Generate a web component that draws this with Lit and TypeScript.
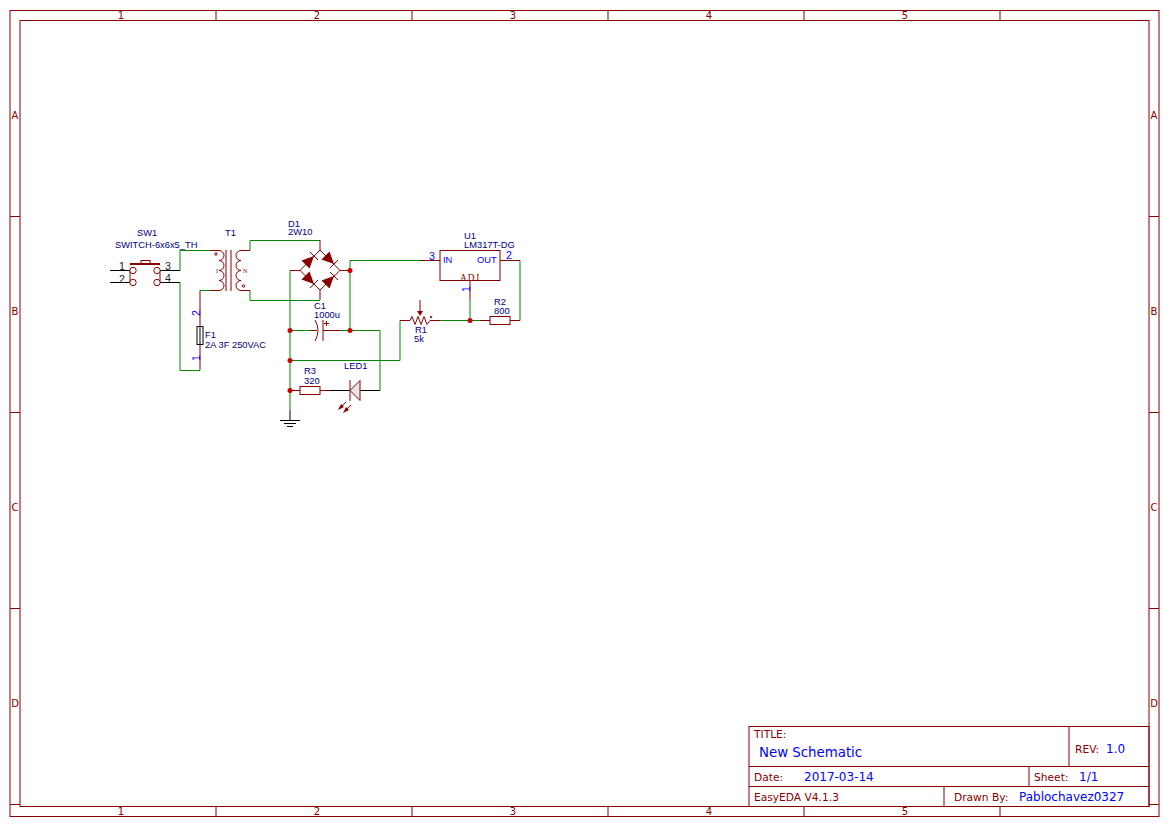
import { LitElement, html, svg, css } from "lit";
import { customElement } from "lit/decorators.js";

type T = [number, number, string];

const WIRES = [
  "M180 270.5V250.5H210", "M180 282.5V370.5H200", "M200 290.5H210", "M250 250.5V240.5H320",
  "M250 290.5V300.5H320", "M290 270.5V410", "M350 270.5V260.5H420", "M350 270.5V330",
  "M290 330.5H310", "M340 330.5H380V390.5", "M290 360.5H400V320.5H410", "M430 320.5H480",
  "M470 300V320.5", "M520 260.5V320.5",
];
const BLACK = [
  "M110 270.5H130", "M110 282.5H130", "M160 270.5H180", "M160 282.5H180",
  "M330 390.5H350", "M360 390.5H380", "M290 410V420.5", "M280 420.5H300", "M284 423.5H296", "M287 426.5H293",
];
const SYMBOL = [
  "M130 270V282", "M160 270V282",
  "M210 250.5H219", "M210 290.5H219", "M241 250.5H250", "M241 290.5H250",
  "M219 250.5A5 5 0 0 1 219 260.5A5 5 0 0 1 219 270.5A5 5 0 0 1 219 280.5A5 5 0 0 1 219 290.5",
  "M241 250.5A5 5 0 0 0 241 260.5A5 5 0 0 0 241 270.5A5 5 0 0 0 241 280.5A5 5 0 0 0 241 290.5",
  "M226 250V291", "M231 250V291",
  "M200 290.5V326", "M200 345V370",
  "M320 240V250", "M320 290V300", "M290 270.5H300", "M340 270.5H350",
  "M300 270.5L320 250L340 270.5L320 290Z",
  "M310 252L318 260", "M330 268L338 260", "M310 288L318 280", "M330 272L338 280",
  "M420 260.5H440", "M500 260.5H520", "M470 280V300", "M480 320.5H490", "M510 320.5H520",
  "M400 320.5H410L412 316.5L415 324.5L418 316.5L421 324.5L424 316.5L427 324.5L430 320.5H440",
  "M420 300V312",
  "M310 330.5H317", "M323 330.5H340", "M323 320V341", "M315 320Q321 330.5 315 341",
  "M324 323.5H329", "M326.5 321V326",
  "M290 390.5H300", "M320 390.5H330", "M350 380V401",
  "M346 402L341 407", "M351 405L346 410",
];
const DIODES = [
  "314,256 301.5,260.5 309.5,268.5", "334,264 321.5,259.5 329.5,251.5",
  "314,284 301.5,279.5 309.5,271.5", "334,276 321.5,280.5 329.5,288.5",
  "338,410 341,404 344,407", "343,413 346,407 349,410", "420,316 417,311 423,311",
];
const DOTS = [[350, 270.5], [290, 330.5], [350, 330.5], [290, 360.5], [290, 390.5], [470, 320.5]];
const PARTS: T[] = [
  [137, 236, "SW1"], [115, 247.5, "SWITCH-6x6x5_TH"], [225, 236, "T1"], [288, 227, "D1"], [288, 235, "2W10"],
  [314, 309, "C1"], [314, 318, "1000u"], [415, 333, "R1"], [414, 342, "5k"], [494, 305, "R2"], [494, 314, "800"],
  [304, 374, "R3"], [304, 384, "320"], [344, 369, "LED1"], [464, 238.5, "U1"], [464, 247.5, "LM317T-DG"],
  [205, 338, "F1"], [205, 348, "2A 3F 250VAC"],
];
const PINS: T[] = [[443, 263, "IN"], [477, 263, "OUT"]];
const PIN_NUMS: T[] = [[429, 260, "3"], [506, 259, "2"]];
const SW_PINS: T[] = [[119, 270, "1"], [119, 283, "2"], [165, 270, "3"], [165, 282, "4"]];
const TB_LABEL: T[] = [
  [754, 738, "TITLE:"], [1075, 753, "REV:"], [754, 781, "Date:"], [1034, 781, "Sheet:"],
  [754, 801, "EasyEDA V4.1.3"], [954, 801, "Drawn By:"],
];
const TB_VALUE: T[] = [[804, 781, "2017-03-14"], [1079, 781, "1/1"], [1019, 801, "Pablochavez0327"]];
const COL_TICKS = [216, 412, 608, 804, 1000];
const ROW_TICKS = [216, 412, 608, 804];
const COLS = ["1", "2", "3", "4", "5"];
const ROWS = ["A", "B", "C", "D"];

@customElement("app-root")
export class AppRoot extends LitElement {
  static styles = css`
    :host { display: block; width: 1169px; height: 827px; background: #fff; }
    svg { display: block; }
    .line { fill: none; stroke: #880000; stroke-width: 1; }
    .thick { fill: none; stroke: #880000; stroke-width: 2; }
    .wire { fill: none; stroke: #008800; stroke-width: 1; }
    .black { fill: none; stroke: #000; stroke-width: 1; }
    .solid { fill: #880000; stroke: none; }
    .dot { fill: #cc0000; }
    .open { fill: #fff; stroke: #880000; stroke-width: 1; }
    .led { fill: #e6e6e6; stroke: #880000; stroke-width: 1; }
    .fuse { fill: #fff; stroke: #000; stroke-width: 1; }
    .part { font: 9.33px "Liberation Sans", sans-serif; fill: #000080; }
    .pin { font: 9.33px "Liberation Sans", sans-serif; fill: #0000ff; }
    .num { font: 10.67px "Liberation Sans", sans-serif; fill: #0000ff; }
    .swpin { font: 10.67px "Liberation Sans", sans-serif; fill: #222; }
    .adj { font: 9.33px "Liberation Serif", serif; fill: #880000; letter-spacing: 1px; }
    .coil { font: 6px "Liberation Serif", serif; fill: #880000; }
    .frame { font: 10px "DejaVu Sans", sans-serif; fill: #880000; text-anchor: middle; }
    .tbl { font: 10.67px "DejaVu Sans", sans-serif; fill: #880000; }
    .tbv { font: 12px "DejaVu Sans", sans-serif; fill: #0000ff; }
    .tbt { font: 13.33px "DejaVu Sans", sans-serif; fill: #0000ff; }
  `;

  private texts(items: T[], cls: string) {
    return items.map(([x, y, t]) => svg`<text class=${cls} x=${x} y=${y}>${t}</text>`);
  }

  private frame() {
    return svg`
      <rect class="line" x="10" y="10.5" width="1149" height="806"></rect>
      <rect class="line" x="20" y="20.5" width="1129" height="786"></rect>
      ${COL_TICKS.map((x) => svg`<path class="line" d="M${x} 10.5V20.5M${x} 806.5V816.5"></path>`)}
      ${ROW_TICKS.map((y) => svg`<path class="line" d="M10 ${y + 0.5}H20M1149 ${y + 0.5}H1159"></path>`)}
      ${COLS.map((c, i) => svg`
        <text class="frame" x=${121 + i * 196} y="19">${c}</text>
        <text class="frame" x=${121 + i * 196} y="815">${c}</text>`)}
      ${ROWS.map((r, i) => svg`
        <text class="frame" x="15" y=${119 + i * 196}>${r}</text>
        <text class="frame" x="1154" y=${119 + i * 196}>${r}</text>`)}
    `;
  }

  private titleBlock() {
    return svg`
      <rect class="line" x="749" y="726.5" width="400" height="80"></rect>
      <path class="line" d="M749 766.5H1149M749 786.5H1149M1069 726.5V766.5M1029 766.5V786.5M944 786.5V806.5"></path>
      ${this.texts(TB_LABEL, "tbl")}
      ${this.texts(TB_VALUE, "tbv")}
      <text class="tbt" x="759" y="757">New Schematic</text>
      <text class="tbv" x="1106" y="753">1.0</text>
    `;
  }

  private schematic() {
    return svg`
      ${WIRES.map((d) => svg`<path class="wire" d=${d}></path>`)}
      ${BLACK.map((d) => svg`<path class="black" d=${d}></path>`)}
      ${SYMBOL.map((d) => svg`<path class="line" d=${d}></path>`)}
      ${DIODES.map((p) => svg`<polygon class="solid" points=${p}></polygon>`)}
      <path class="thick" d="M130 264H160"></path>
      <rect class="line" x="141" y="260.5" width="9" height="3"></rect>
      ${[[133, 270.5], [133, 282.5], [157, 270.5], [157, 282.5]].map(
        ([x, y]) => svg`<circle class="open" cx=${x} cy=${y} r="3.2"></circle>`)}
      <circle class="line" cx="216" cy="254" r="1.2"></circle>
      <circle class="line" cx="243.5" cy="286" r="1.2"></circle>
      <text class="coil" x="216" y="273">I</text>
      <text class="coil" x="243" y="273">N</text>
      <rect class="fuse" x="197" y="326.5" width="6" height="18"></rect>
      <path class="black" d="M200 327V344"></path>
      <rect class="line" x="440" y="250.5" width="60" height="30"></rect>
      <text class="adj" x="460" y="280.5">ADJ</text>
      <rect class="line" x="300" y="386.5" width="20" height="8"></rect>
      <rect class="line" x="490" y="316.5" width="20" height="8"></rect>
      <polygon class="led" points="350,390.5 360,380.5 360,400.5"></polygon>
      <circle class="line" cx="431" cy="317" r="0.8"></circle>
      ${DOTS.map(([x, y]) => svg`<circle class="dot" cx=${x} cy=${y} r="2.5"></circle>`)}
      ${this.texts(PARTS, "part")}
      ${this.texts(PINS, "pin")}
      ${this.texts(PIN_NUMS, "num")}
      ${this.texts(SW_PINS, "swpin")}
      <text class="num" transform="translate(199.5 316) rotate(-90)">2</text>
      <text class="num" transform="translate(199.5 361) rotate(-90)">1</text>
      <text class="num" transform="translate(469.5 292) rotate(-90)">1</text>
    `;
  }

  render() {
    return html`<svg width="1169" height="827" viewBox="0 0 1169 827" xmlns="http://www.w3.org/2000/svg">
      ${this.frame()}${this.schematic()}${this.titleBlock()}
    </svg>`;
  }
}
